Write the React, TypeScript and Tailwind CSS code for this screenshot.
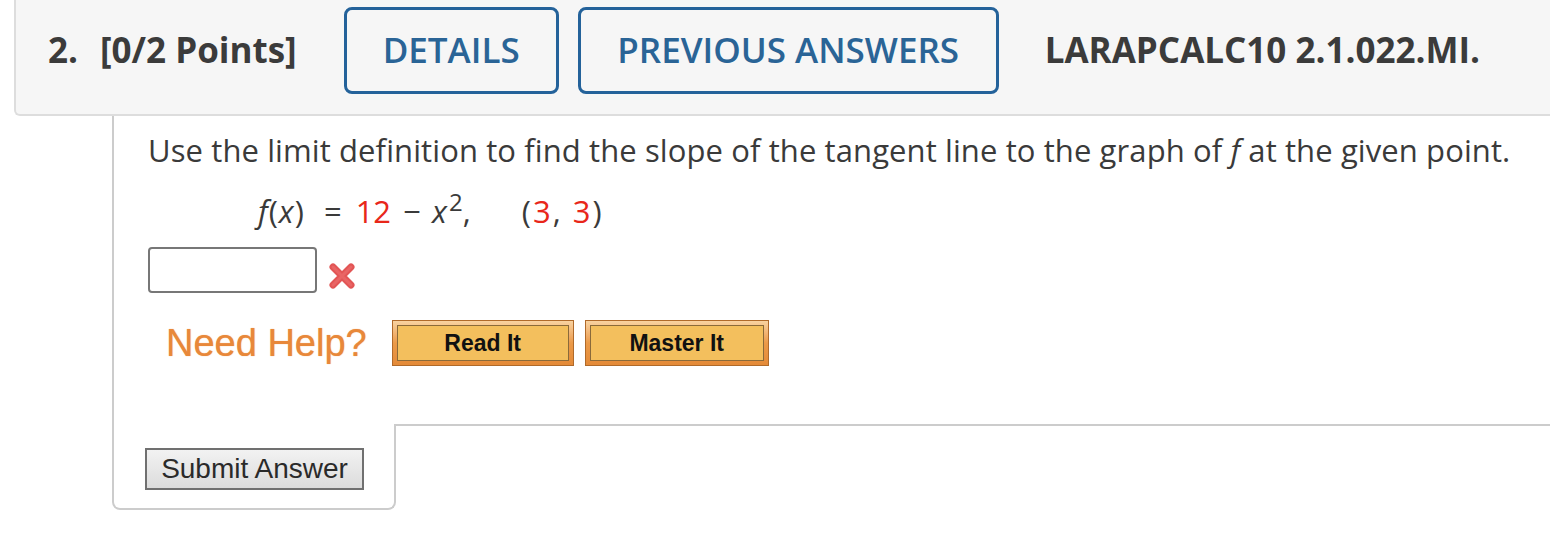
export default function App() {
  return (
    <div className="min-h-[538px] w-[1550px] overflow-hidden bg-white">
      {/* Question header */}
      <div className="ml-[14px] -mr-10 flex items-center rounded-bl-[6px] border-b-2 border-l-2 border-[#dddddd] bg-[#f6f6f6] pb-[20px] pl-[32px] pt-[7px] font-['Open_Sans',sans-serif] text-[#3b3b3b]">
        <span className="text-[35px] font-bold">2.</span>
        <span className="ml-[22px] text-[35px] font-bold">[0/2 Points]</span>
        <button className="ml-[47px] h-[87px] w-[215px] rounded-[8px] border-[3px] border-[#24629a] text-[35px] font-semibold text-[#2a6496]">
          DETAILS
        </button>
        <button className="ml-[19px] h-[87px] w-[421px] rounded-[8px] border-[3px] border-[#24629a] text-[35px] font-semibold text-[#2a6496]">
          PREVIOUS ANSWERS
        </button>
        <span className="ml-[46px] text-[35px] font-bold">LARAPCALC10 2.1.022.MI.</span>
      </div>

      {/* Question body */}
      <div className="ml-[112px]">
        <div className="border-l-2 border-[#cccccc] pl-[34px] pt-[16px] font-['Open_Sans',sans-serif] text-[31px] text-[#3a3a3a]">
          <p className="leading-[36px] tracking-[0.1px]">
            Use the limit definition to find the slope of the tangent line to the graph of <i>f</i> at the given point.
          </p>
          <div className="ml-[110px] mt-[25px] flex items-baseline leading-[36px]">
            <span className="tracking-[1px]">
              <i>f</i>(<i>x</i>)
            </span>
            <span className="ml-[19px]">=</span>
            <span className="ml-[14px] text-[#e8271a]">12</span>
            <span className="ml-[12px] inline-block w-[18px] text-center">−</span>
            <span className="ml-[11px]">
              <i>x</i>
              <sup className="ml-[2px] text-[24px] leading-none">2</sup>,
            </span>
            <span className="ml-[51px] tracking-[2px]">
              (<span className="text-[#e8271a]">3</span>, <span className="text-[#e8271a]">3</span>)
            </span>
          </div>
          <div className="mt-[18px] flex items-start">
            <div className="h-[46px] w-[169px] rounded-[4px] border-2 border-[#777777] bg-white" />
            <svg className="ml-[10px] mt-[14px]" width="30" height="30" viewBox="0 0 30 30">
              <path d="M6 6 L24 24 M24 6 L6 24" stroke="#e25555" strokeWidth="7" strokeLinecap="round" />
              <path d="M6 6 L24 24 M24 6 L6 24" stroke="#ef7070" strokeWidth="3" strokeLinecap="round" opacity="0.6" />
            </svg>
          </div>
          <div className="mt-[27px] flex items-center pb-[58px] font-['Liberation_Sans',Arial,sans-serif]">
            <span className="ml-[18px] text-[38px] leading-[46px] text-[#e8883a] [text-shadow:0_0_1px_#f0a060]">Need Help?</span>
            <HelpButton label="Read It" className="ml-[25px] w-[182px]" />
            <HelpButton label="Master It" className="ml-[11px] w-[184px]" />
          </div>
        </div>
        <div className="flex">
          <div className="w-[284px] rounded-b-[8px] border-x-2 border-b-2 border-[#cccccc] pb-[18px] pl-[31px] pt-[24px]">
            <button className="h-[42px] w-[219px] border-2 border-[#707070] bg-gradient-to-b from-[#f2f2f2] to-[#dcdcdc] font-['Liberation_Sans',Arial,sans-serif] text-[28px] leading-none text-[#2a2a2a]">
              Submit Answer
            </button>
          </div>
          <div className="flex-1 -ml-[2px] border-t-2 border-[#cccccc]" />
        </div>
      </div>
    </div>
  );
}

function HelpButton({ label, className }: { label: string; className: string }) {
  return (
    <div
      className={`${className} h-[46px] border border-[#b06a2a] bg-gradient-to-b from-[#f8d2a0] via-[#eb9a48] to-[#e48a38] p-[4px]`}
    >
      <div className="flex h-full items-center justify-center border border-[#8a6a3a] bg-[#f3bf5d] font-['Liberation_Sans',Arial,sans-serif] text-[23px] font-bold text-[#111111]">
        {label}
      </div>
    </div>
  );
}
